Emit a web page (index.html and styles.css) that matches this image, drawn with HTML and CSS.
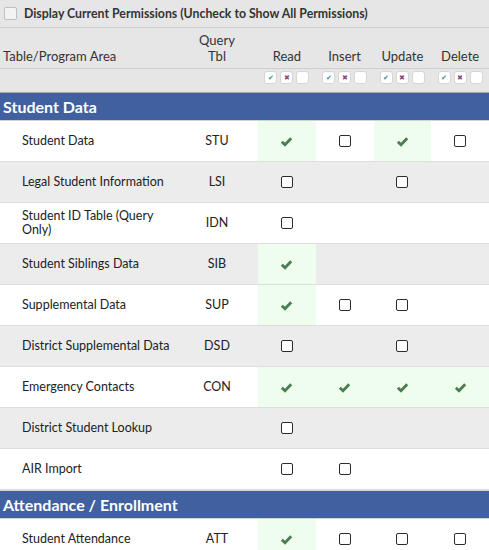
FILE: index.html
```html
<!DOCTYPE html>
<html lang="en">
<head>
    <meta charset="UTF-8" />
    <title>Permissions</title>
    <link rel="stylesheet" href="styles.css">
</head>
<body>
    <div class="topbar">
        <span class="top-check"></span>
        <span>Display Current Permissions (Uncheck to Show All Permissions)</span>
    </div>

    <div class="grid head">
        <div class="cell name">Table/Program Area</div>
        <div class="cell">Query<br>Tbl</div>
        <div class="cell">Read</div>
        <div class="cell">Insert</div>
        <div class="cell">Update</div>
        <div class="cell">Delete</div>
    </div>

    <div class="grid filters">
        <div></div>
        <div></div>
        <div class="btns"><span class="fbtn ok">&#10004;</span><span class="fbtn no">&#10006;</span><span class="fbtn"></span></div>
        <div class="btns"><span class="fbtn ok">&#10004;</span><span class="fbtn no">&#10006;</span><span class="fbtn"></span></div>
        <div class="btns"><span class="fbtn ok">&#10004;</span><span class="fbtn no">&#10006;</span><span class="fbtn"></span></div>
        <div class="btns"><span class="fbtn ok">&#10004;</span><span class="fbtn no">&#10006;</span><span class="fbtn"></span></div>
    </div>

    <div class="section">Student Data</div>
    <div id="rows-student"></div>

    <div class="section">Attendance / Enrollment</div>
    <div id="rows-attendance"></div>

    <script>
        // 1 = granted (check), 0 = box, null = not available
        var studentRows = [
            ['Student Data', 'STU', [1, 0, 1, 0]],
            ['Legal Student Information', 'LSI', [0, null, 0, null]],
            ['Student ID Table (Query Only)', 'IDN', [0, null, null, null]],
            ['Student Siblings Data', 'SIB', [1, null, null, null]],
            ['Supplemental Data', 'SUP', [1, 0, 0, null]],
            ['District Supplemental Data', 'DSD', [0, null, 0, null]],
            ['Emergency Contacts', 'CON', [1, 1, 1, 1]],
            ['District Student Lookup', '', [0, null, null, null]],
            ['AIR Import', '', [0, 0, null, null]]
        ];
        var attendanceRows = [
            ['Student Attendance', 'ATT', [1, 0, 0, 0]]
        ];

        var checkSvg = '<svg width="13" height="11" viewBox="0 0 13 11"><path d="M1.8 5.8 L5 8.8 L11.2 2.2" fill="none" stroke="#4b7d50" stroke-width="2.8"/></svg>';

        function buildRows(containerId, rows) {
            var box = document.getElementById(containerId);
            rows.forEach(function (r, i) {
                var row = document.createElement('div');
                row.className = 'grid row' + (i % 2 ? ' alt' : '');
                var html = '<div class="cell name">' + r[0] + '</div><div class="cell">' + r[1] + '</div>';
                r[2].forEach(function (p) {
                    if (p === 1) {
                        html += '<div class="cell granted">' + checkSvg + '</div>';
                    } else if (p === 0) {
                        html += '<div class="cell"><span class="box"></span></div>';
                    } else {
                        html += '<div class="cell"></div>';
                    }
                });
                row.innerHTML = html;
                box.appendChild(row);
            });
        }

        buildRows('rows-student', studentRows);
        buildRows('rows-attendance', attendanceRows);
    </script>
</body>
</html>
```

FILE: styles.css
```css
body {
    margin: 0;
    font-family: Lato, "Open Sans", sans-serif;
    font-size: 12.5px;
    color: #222;
    background: white;
}
.topbar {
    display: flex;
    align-items: center;
    gap: 7px;
    height: 27px;
    padding-left: 4px;
    background: #e6e6e6;
    border-bottom: 1px solid #cfcfcf;
    font-size: 12.3px;
    font-weight: bold;
    color: #333;
}
.top-check {
    width: 11px;
    height: 11px;
    border: 1px solid #c0c0c0;
    border-radius: 2px;
    background: #f3f3f3;
}
.grid {
    display: grid;
    grid-template-columns: 176px 82px repeat(4, 1fr);
}
.cell {
    display: flex;
    align-items: center;
    justify-content: center;
    text-align: center;
}
.cell.name {
    justify-content: flex-start;
    text-align: left;
    padding: 0 0 0 22px;
}
.head {
    height: 40px;
    background: #e6e6e6;
    border-bottom: 1px solid #cfcfcf;
    font-size: 13px;
    line-height: 16px;
    color: #333;
}
.head .cell {
    align-items: flex-end;
    padding-bottom: 4px;
}
.head .cell.name {
    padding-left: 3px;
}
.filters {
    height: 23px;
    background: #e6e6e6;
    border-bottom: 1px solid #a9a9a9;
}
.btns {
    display: flex;
    justify-content: center;
    gap: 3px;
    padding-top: 2px;
}
.fbtn {
    width: 11px;
    height: 11px;
    border: 1px solid #d6d6d6;
    border-radius: 3px;
    background: white;
    font-size: 7px;
    line-height: 11px;
    text-align: center;
}
.fbtn.ok {
    color: #3d8a9a;
}
.fbtn.no {
    color: #8a4a7a;
}
.section {
    height: 27px;
    line-height: 27px;
    padding-left: 3px;
    background: #4060a0;
    color: white;
    font-size: 16px;
    font-weight: bold;
    border-bottom: 1px solid #d2d2d2;
}
.row {
    height: 40px;
    border-bottom: 1px solid #dedede;
    background: white;
    line-height: 14px;
}
.row.alt {
    background: #ececec;
}
#rows-student + .section {
    border-top: 1px solid #d2d2d2;
}
.granted {
    background: #effdee;
}
.box {
    width: 10px;
    height: 10px;
    border: 1px solid #2c2c2c;
    border-radius: 2px;
    background: white;
}
```
